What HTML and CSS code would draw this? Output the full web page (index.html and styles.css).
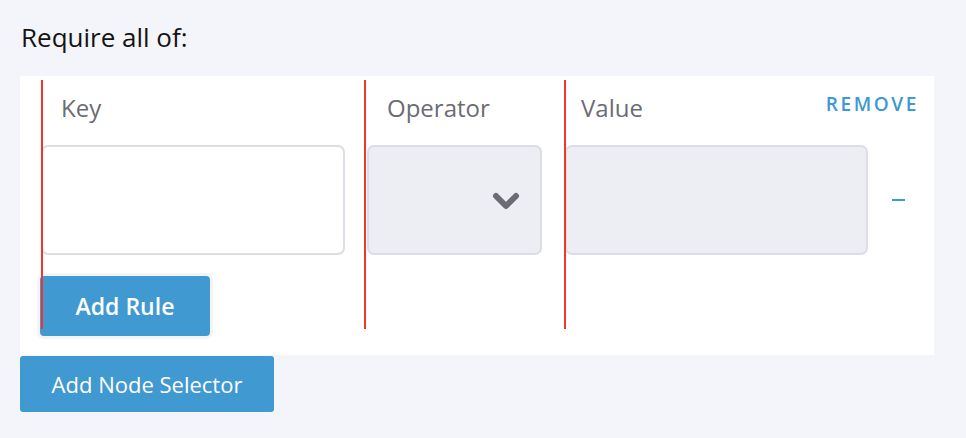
FILE: index.html
```html
<!DOCTYPE html>
<html>
<head>
<meta charset="utf-8">
<link rel="stylesheet" href="styles.css">
</head>
<body>
<div class="page">
  <h3 class="title">Require all of:</h3>
  <div class="panel">
    <div class="rules">
      <div class="col col-key">
        <div class="label">Key</div>
        <input class="field" type="text">
        <button class="btn btn-rule">Add Rule</button>
      </div>
      <div class="col col-op">
        <div class="label">Operator</div>
        <div class="field select">
          <svg class="chev" width="28" height="19" viewBox="0 0 28 19"><path d="M4 4 L14 14 L24 4" fill="none" stroke="#6c6b75" stroke-width="6" stroke-linecap="round" stroke-linejoin="round"/></svg>
        </div>
      </div>
      <div class="col col-val">
        <div class="label">Value</div>
        <div class="field disabled"></div>
      </div>
      <div class="col col-rm">
        <div class="remove">REMOVE</div>
        <div class="minus-wrap"><span class="minus"></span></div>
      </div>
    </div>
  </div>
  <button class="btn btn-node">Add Node Selector</button>
</div>
</body>
</html>
```
FILE: styles.css
```css
html, body {
  margin: 0;
  padding: 0;
  background: #f4f5fa;
  font-family: "Open Sans", "Noto Sans", sans-serif;
}
.page {
  padding: 0 20px;
  width: 914px;
}
.title {
  margin: 0;
  height: 76px;
  box-sizing: border-box;
  padding-top: 18px;
  font-weight: 400;
  font-size: 26px;
  line-height: 38px;
  color: #141414;
  padding-left: 1px;
}
.panel {
  background: #fff;
  height: 279px;
  box-sizing: border-box;
  padding: 4px 17px 0 21px;
}
.rules {
  display: flex;
}
.col {
  position: relative;
  flex-shrink: 0;
  height: 249px;
  display: flex;
  flex-direction: column;
}
.col > * { flex-shrink: 0; }
.col::before {
  content: "";
  position: absolute;
  left: 0;
  top: 0;
  width: 2px;
  height: 249px;
  background: #f5352a;
  z-index: 2;
}
.col-op::before { left: -3px; }
.col-val::before { left: -1px; }
.col-rm::before { display: none; }
.col-key { width: 304px; }
.col-op { width: 175px; margin-left: 22px; }
.col-val { width: 303px; margin-left: 23px; }
.col-rm { width: 49px; min-width: 0; align-items: flex-end; }
.label {
  height: 65px;
  box-sizing: border-box;
  padding: 12px 0 0 20px;
  font-size: 24px;
  line-height: 32px;
  color: #6c6b75;
}
.col-val .label { padding-left: 16px; }
.field {
  display: block;
  box-sizing: border-box;
  width: 100%;
  height: 110px;
  margin: 0;
  border: 2px solid #dcdde6;
  border-radius: 7px;
  background: #fff;
  padding: 0;
  font: inherit;
}
.select, .disabled {
  background: #eceef3;
}
.select {
  display: flex;
  align-items: center;
  justify-content: flex-end;
  padding-right: 20px;
}
.chev { display: block; margin-top: 2px; }
.btn {
  border: none;
  background: #4199d1;
  color: #fff;
  font-family: inherit;
  padding: 0;
  border-radius: 4px;
}
.btn-rule {
  margin-top: 21px;
  margin-left: -1px;
  width: 170px;
  height: 60px;
  font-size: 23px;
  font-weight: 600;
  box-shadow: 0 0 0 3px #f3f4f9;
}
.btn-node {
  display: block;
  margin-top: 1px;
  width: 254px;
  height: 56px;
  font-size: 22px;
  font-weight: 500;
  border-radius: 3px;
}
.remove {
  white-space: nowrap;
  font-size: 19px;
  line-height: 24px;
  padding-top: 12px;
  letter-spacing: 2.6px;
  margin-right: -2px;
  font-weight: 600;
  color: #3d98d3;
  height: 65px;
  box-sizing: border-box;
}
.minus-wrap {
  height: 110px;
  display: flex;
  align-items: center;
  padding-right: 12px;
}
.minus {
  display: block;
  width: 13px;
  height: 2px;
  background: #4199d1;
}
```
